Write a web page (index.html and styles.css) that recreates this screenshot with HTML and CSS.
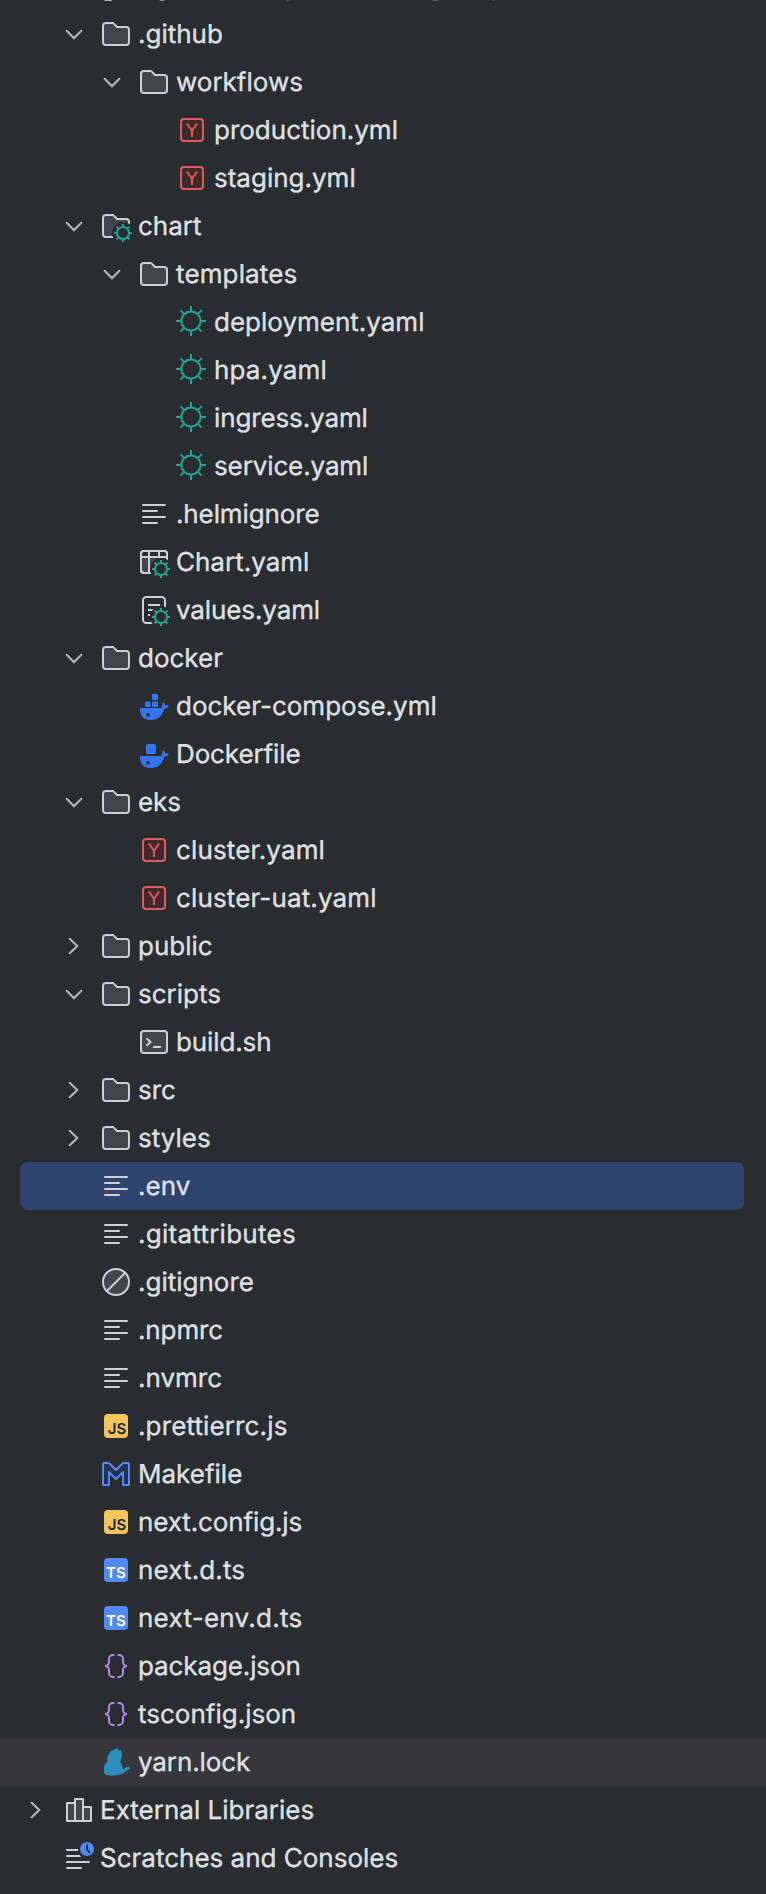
FILE: index.html
```
<!DOCTYPE html>
<html lang="en">
<head>
<meta charset="utf-8">
<title>Project</title>
<link rel="stylesheet" href="styles.css">
</head>
<body>
<svg class="defs" aria-hidden="true">
  <symbol id="down" viewBox="0 0 32 32"><path class="chev" d="M8.7 12.7l7.3 7.6 7.3-7.6"/></symbol>
  <symbol id="right" viewBox="0 0 32 32"><path class="chev" d="M11.7 8.7l7.6 7.3-7.6 7.3"/></symbol>
  <symbol id="folder" viewBox="0 0 32 32"><path class="box" d="M3 8a3 3 0 0 1 3-3h6.300a2 2 0 0 1 1.500.600L17 9h9a3 3 0 0 1 3 3v12a3 3 0 0 1-3 3H6a3 3 0 0 1-3-3z"/></symbol>
  <symbol id="yml" viewBox="0 0 32 32"><rect x="5" y="5" width="22" height="22" rx="3" fill="#402929" stroke="#db5c5c" stroke-width="2"/><path d="M11 9.500l5 7.500 5-7.500M16 17v6" fill="none" stroke="#db5c5c" stroke-width="2"/></symbol>
  <symbol id="wheel" viewBox="0 0 32 32"><g fill="none" stroke="#24a394" stroke-width="2"><circle cx="15" cy="15" r="9.600"/><path d="M15 0v5M15 25v5M0 15h5M25 15h5M4.400 4.400l3.500 3.500M22.100 22.100l3.500 3.500M4.400 25.600l3.500-3.500M22.100 7.900l3.500-3.500"/></g></symbol>
  <symbol id="gear" viewBox="0 0 18 18"><g fill="none" stroke="#24a394" stroke-width="2"><circle cx="9" cy="9" r="6"/><path d="M9 0v3M9 15v3M0 9h3M15 9h3M2.600 2.600l2.200 2.200M13.200 13.200l2.200 2.200M2.600 15.400l2.200-2.200M13.200 4.800l2.200-2.200"/></g></symbol>
  <mask id="cut" maskUnits="userSpaceOnUse" x="0" y="0" width="32" height="32"><rect width="32" height="32" fill="#fff"/><circle cx="23" cy="23" r="11" fill="#000"/></mask>
  <symbol id="helmdir" viewBox="0 0 32 32"><g mask="url(#cut)"><path class="box" d="M3 8a3 3 0 0 1 3-3h6.300a2 2 0 0 1 1.500.600L17 9h9a3 3 0 0 1 3 3v12a3 3 0 0 1-3 3H6a3 3 0 0 1-3-3z"/></g><use href="#gear" x="14" y="14" width="18" height="18"/></symbol>
  <symbol id="table" viewBox="0 0 32 32"><g mask="url(#cut)"><rect class="box" x="3" y="5" width="26" height="22" rx="3"/><path d="M4 6h24v4H4z" fill="#2a2d30"/><rect x="3" y="5" width="26" height="22" rx="3" class="line"/><path class="line" d="M3 11h26M11 5v22M21 5v6"/></g><use href="#gear" x="14" y="14" width="18" height="18"/></symbol>
  <symbol id="values" viewBox="0 0 32 32"><g mask="url(#cut)"><rect class="line" x="5" y="3" width="22" height="26" rx="3.500"/><path class="line" d="M10 11h12M10 16h6M10 21h2"/></g><use href="#gear" x="14" y="14" width="18" height="18"/></symbol>
  <symbol id="text" viewBox="0 0 32 32"><path class="line round" d="M5 7h22M5 13h14M5 19h22M5 25h14"/></symbol>
  <symbol id="whale" viewBox="0 0 32 32"><path fill="#3574f0" fill-rule="evenodd" d="M2 18h21.200c1-.900 1.400-2 1.100-3.300-.200-1 .100-2 .800-2.800 1.200.800 1.900 1.900 2 3.200 1.100-.200 2.400 0 3.600.800-.800 1.700-2.300 2.600-4.500 2.600C24.500 26 20 30 12.500 30 5.500 30 2 26 2 19.500zM10 22.900a1.900 1.900 0 1 0 0 3.800a1.900 1.900 0 1 0 0-3.800z"/></symbol>
  <symbol id="compose" viewBox="0 0 32 32"><use href="#whale"/><path fill="#3574f0" d="M7 11.500h5.500v5.500H7zM14 11.500h6v5.500h-6zM14 4h6v6h-6z"/></symbol>
  <symbol id="docker" viewBox="0 0 32 32"><use href="#whale"/><rect x="8" y="6" width="10" height="10" rx="1.500" fill="#3574f0"/></symbol>
  <symbol id="shell" viewBox="0 0 32 32"><rect class="box" x="3" y="5" width="26" height="22" rx="3"/><path class="line" d="M8.500 12.200l4 3.800-4 3.800M15 21h8"/></symbol>
  <symbol id="ignore" viewBox="0 0 32 32"><circle class="box" cx="16" cy="16" r="13"/><path class="line" d="M7 25L25 7"/></symbol>
  <symbol id="js" viewBox="0 0 32 32"><rect x="4" y="4" width="24" height="24" rx="4" fill="#f2c55c"/><text class="tag" x="7.800" y="24" fill="#1e1f22">JS</text></symbol>
  <symbol id="ts" viewBox="0 0 32 32"><rect x="4" y="4" width="24" height="24" rx="4" fill="#548af7"/><text class="tag" x="6" y="24" fill="#fff">TS</text></symbol>
  <symbol id="make" viewBox="0 0 32 32"><path d="M3 6a1 1 0 0 1 1-1h5l7 7 7-7h5a1 1 0 0 1 1 1v21h-6V14l-7 7-7-7v13H3z" fill="#25324d" stroke="#548af7" stroke-width="2" stroke-linejoin="round"/></symbol>
  <symbol id="json" viewBox="0 0 32 32"><path d="M14.500 5H13a4 4 0 0 0-4 4v3a4 4 0 0 1-4 4 4 4 0 0 1 4 4v3a4 4 0 0 0 4 4h1.500M17.500 5H19a4 4 0 0 1 4 4v3a4 4 0 0 0 4 4 4 4 0 0 0-4 4v3a4 4 0 0 1-4 4h-1.500" fill="none" stroke="#b589ec" stroke-width="2"/></symbol>
  <symbol id="yarn" viewBox="0 0 32 32"><path fill="#2c8ebb" d="M17 2c.900.700 1.200 1.800 1.600 2.500 1-.300 1.800-.400 2.600-.200.900 3 1 6.500.100 9.300-.500 1.300-1 2.500-.700 3.500 1.700 2.600 2.300 4.400 2.400 6.100 2.200-.700 3.200-2.500 6-2.500 1.600 0 1.500 2.200.200 2.800-3 1-5.500 4-9 5-4 1.300-9 1.500-13.500.600-2.500-.400-3-2.500-2.600-3.600-.900-4 .600-7.500 3.500-10.200-.900-2.500-.300-5 1.500-7 .200-2.600 2-4 4.500-4.300.900-.300 1.800-1.600 3.100-2z"/></symbol>
  <symbol id="libs" viewBox="0 0 32 32"><path class="box" d="M5 9h8v18H5zM13 5h8v22h-8zM21 13h8v14h-8z"/></symbol>
  <symbol id="scratch" viewBox="0 0 32 32"><path class="line round" d="M5 8h11M5 14h14M5 20h22M5 26h14"/><circle cx="25" cy="8" r="9" fill="#2a2d30"/><circle cx="25" cy="7" r="7" fill="#548af7"/><path d="M25 2.500v5l3.200 3.200" fill="none" stroke="#25324d" stroke-width="2"/></symbol>
</svg>
<ul class="tree">
  <li class="row root d1"><b>group</b><span class="path">~/code/production/gold/p</span></li>
  <li class="row d1"><svg><use href="#down"/></svg><svg><use href="#folder"/></svg>.github</li>
  <li class="row d2"><svg><use href="#down"/></svg><svg><use href="#folder"/></svg>workflows</li>
  <li class="row leaf d3"><svg><use href="#yml"/></svg>production.yml</li>
  <li class="row leaf d3"><svg><use href="#yml"/></svg>staging.yml</li>
  <li class="row d1"><svg><use href="#down"/></svg><svg><use href="#helmdir"/></svg>chart</li>
  <li class="row d2 loose"><svg><use href="#down"/></svg><svg><use href="#folder"/></svg>templates</li>
  <li class="row leaf d3"><svg><use href="#wheel"/></svg>deployment.yaml</li>
  <li class="row leaf d3 loose"><svg><use href="#wheel"/></svg>hpa.yaml</li>
  <li class="row leaf d3 tight"><svg><use href="#wheel"/></svg>ingress.yaml</li>
  <li class="row leaf d3 tight"><svg><use href="#wheel"/></svg>service.yaml</li>
  <li class="row leaf d2 tight"><svg><use href="#text"/></svg>.helmignore</li>
  <li class="row leaf d2"><svg><use href="#table"/></svg>Chart.yaml</li>
  <li class="row leaf d2 tight"><svg><use href="#values"/></svg>values.yaml</li>
  <li class="row d1"><svg><use href="#down"/></svg><svg><use href="#folder"/></svg>docker</li>
  <li class="row leaf d2"><svg><use href="#compose"/></svg>docker-compose.yml</li>
  <li class="row leaf d2 tight"><svg><use href="#docker"/></svg>Dockerfile</li>
  <li class="row d1 tight"><svg><use href="#down"/></svg><svg><use href="#folder"/></svg>eks</li>
  <li class="row leaf d2 loose"><svg><use href="#yml"/></svg>cluster.yaml</li>
  <li class="row leaf d2 loose"><svg><use href="#yml"/></svg>cluster-uat.yaml</li>
  <li class="row d1"><svg><use href="#right"/></svg><svg><use href="#folder"/></svg>public</li>
  <li class="row d1"><svg><use href="#down"/></svg><svg><use href="#folder"/></svg>scripts</li>
  <li class="row leaf d2 tight"><svg><use href="#shell"/></svg>build.sh</li>
  <li class="row d1"><svg><use href="#right"/></svg><svg><use href="#folder"/></svg>src</li>
  <li class="row d1"><svg><use href="#right"/></svg><svg><use href="#folder"/></svg>styles</li>
  <li class="row leaf d1 selected"><svg><use href="#text"/></svg>.env</li>
  <li class="row leaf d1 looser"><svg><use href="#text"/></svg>.gitattributes</li>
  <li class="row leaf d1"><svg><use href="#ignore"/></svg>.gitignore</li>
  <li class="row leaf d1 tight"><svg><use href="#text"/></svg>.npmrc</li>
  <li class="row leaf d1"><svg><use href="#text"/></svg>.nvmrc</li>
  <li class="row leaf d1 loose"><svg><use href="#js"/></svg>.prettierrc.js</li>
  <li class="row leaf d1"><svg><use href="#make"/></svg>Makefile</li>
  <li class="row leaf d1 tight"><svg><use href="#js"/></svg>next.config.js</li>
  <li class="row leaf d1 loose"><svg><use href="#ts"/></svg>next.d.ts</li>
  <li class="row leaf d1 looser"><svg><use href="#ts"/></svg>next-env.d.ts</li>
  <li class="row leaf d1 tight"><svg><use href="#json"/></svg>package.json</li>
  <li class="row leaf d1"><svg><use href="#json"/></svg>tsconfig.json</li>
  <li class="row leaf d1 tight hover"><svg><use href="#yarn"/></svg>yarn.lock</li>
  <li class="row d0"><svg><use href="#right"/></svg><svg><use href="#libs"/></svg>External Libraries</li>
  <li class="row leaf d0"><svg><use href="#scratch"/></svg>Scratches and Consoles</li>
</ul>
</body>
</html>
```
FILE: styles.css
```
body { margin: 0; height: 1894px; overflow: hidden; background: #2a2d30; }
.defs { position: absolute; width: 0; height: 0; }
.tree {
  margin: -38px 0 0;
  padding: 0;
  list-style: none;
  font: 26px/46px Inter, "Liberation Sans", sans-serif;
  text-rendering: geometricPrecision;
  -webkit-text-stroke: 0.35px;
  color: #dfe1e5;
}
.row { display: flex; align-items: center; box-sizing: border-box; height: 48px; padding-top: 2px; white-space: pre; }
.row svg { flex: none; width: 32px; height: 32px; margin: -2px 6px 0 0; letter-spacing: 0; -webkit-text-stroke: 0; }
.row:not(.leaf) svg:first-child { margin-right: 10px; }
.d0 { padding-left: 20px; }
.d1 { padding-left: 58px; }
.d2 { padding-left: 96px; }
.d3 { padding-left: 134px; }
.leaf::before { content: ""; flex: none; width: 42px; }
.root::before { content: ""; width: 42px; }
.path { margin-left: 13px; color: #6f737a; }
.tight { letter-spacing: -0.12px; }
.loose { letter-spacing: 0.13px; }
.looser { letter-spacing: 0.26px; }
.selected { margin: 0 22px 0 20px; padding-left: 38px; border-radius: 8px; background: #2e436e; }
.hover { background: #36363b; }
.box { fill: #43454d; stroke: #ced0d6; stroke-width: 2; stroke-linejoin: round; }
.line { fill: none; stroke: #ced0d6; stroke-width: 2; }
.round { stroke-linecap: round; }
.chev { fill: none; stroke: #b4b8bf; stroke-width: 2; stroke-linecap: round; }
.tag { font: 600 15px Inter, sans-serif; }
```
